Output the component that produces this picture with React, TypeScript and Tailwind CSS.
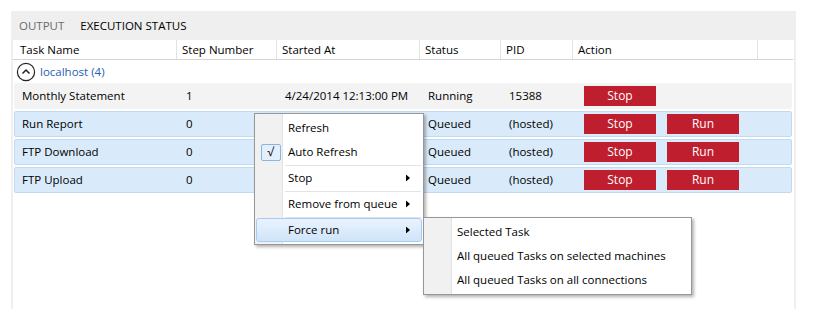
import React from 'react';

const FONT = { fontFamily: '"Segoe UI", "Open Sans", "Noto Sans", sans-serif' };

const cols = ['w-[163px]', 'w-[100px]', 'w-[143px]', 'w-[81px]', 'w-[72px]'];

type Task = { name: string; step: string; started: string; status: string; pid: string; canRun: boolean };

const tasks: Task[] = [
  { name: 'Monthly Statement', step: '1', started: '4/24/2014 12:13:00 PM', status: 'Running', pid: '15388', canRun: false },
  { name: 'Run Report', step: '0', started: '', status: 'Queued', pid: '(hosted)', canRun: true },
  { name: 'FTP Download', step: '0', started: '', status: 'Queued', pid: '(hosted)', canRun: true },
  { name: 'FTP Upload', step: '0', started: '', status: 'Queued', pid: '(hosted)', canRun: true },
];

const ActionButton: React.FC<{ label: string }> = ({ label }) => (
  <button className="w-[72px] h-[20px] bg-[#be1e2d] text-white text-[12px] leading-[20px] text-center">
    {label}
  </button>
);

const Arrow = () => (
  <svg width="4" height="7" viewBox="0 0 4 7" className="absolute right-[11px] top-1/2 -translate-y-1/2">
    <path d="M0 0 L4 3.5 L0 7 Z" fill="#000" />
  </svg>
);

const Separator = () => (
  <div className="h-[2px] flex items-center pl-[30px] pr-[2px]">
    <div className="h-px w-full bg-[#e2e3e3]" />
  </div>
);

const MenuItem: React.FC<{ label: string; checked?: boolean; sub?: boolean; active?: boolean }> = ({
  label,
  checked,
  sub,
  active,
}) => (
  <div
    className={
      'relative h-[24px] flex items-center text-[11.5px] text-black ' +
      (active
        ? 'mx-[1px] rounded-[3px] border border-[#a8cbf0] bg-gradient-to-b from-[#eaf3fd] to-[#cfe4fa]'
        : 'mx-[2px]')
    }
  >
    <div className="w-[27px] h-full flex items-center justify-center shrink-0">
      {checked && (
        <div className="w-[20px] h-[17px] rounded-[2px] border border-[#8db2e3] bg-[#e3effb] flex items-center justify-center text-[12px] leading-none">
          √
        </div>
      )}
    </div>
    <span className="pl-[4px]">{label}</span>
    {sub && <Arrow />}
  </div>
);

export default function App() {
  return (
    <div style={FONT} className="w-[815px] h-[309px] bg-white relative overflow-hidden pt-[11px] pl-[11px]">
      <div className="w-[785px] h-[298px] border-l-2 border-r-2 border-[#efefef] flex flex-col">
        {/* tabs */}
        <div className="h-[29px] bg-[#efefef] flex items-center gap-[16px] pl-[6px] text-[11.5px]">
          <span className="text-[#6b6b6b]">OUTPUT</span>
          <span className="text-black">EXECUTION STATUS</span>
        </div>

        {/* column headers */}
        <div className="h-[20px] flex border-b border-[#d5d5d5] mr-[1px] text-[11.5px] text-black">
          {['Task Name', 'Step Number', 'Started At', 'Status', 'PID'].map((h, i) => (
            <div
              key={h}
              className={
                (i === 0 ? 'w-[164px] pl-[7px] ' : cols[i] + ' pl-[5px] ') +
                'border-r border-[#e3e3e3] leading-[19px]'
              }
            >
              {h}
            </div>
          ))}
          <div className="w-[185px] pl-[5px] border-r border-[#e3e3e3] leading-[19px]">Action</div>
          <div className="flex-1" />
        </div>

        {/* group */}
        <div className="h-[23px] flex items-center pl-[3px] gap-[4px] text-[11.5px] text-[#1f5fb4]">
          <svg width="20" height="20" viewBox="0 0 20 20">
            <circle cx="10" cy="10" r="8.6" fill="none" stroke="#222" strokeWidth="1.2" />
            <path d="M6.5 11.5 L10 8 L13.5 11.5" fill="none" stroke="#222" strokeWidth="1.5" />
          </svg>
          <span>localhost (4)</span>
        </div>

        {/* rows */}
        <div className="flex flex-col gap-[2px] ml-[1px] mr-[2px]">
          {tasks.map((t) => (
            <div
              key={t.name}
              className={
                'h-[26px] flex items-center text-[11.5px] text-black rounded-[2px] border ' +
                (t.canRun ? 'bg-[#d9ebfa] border-[#c3d9ee]' : 'bg-[#f3f3f3] border-[#f3f3f3]')
              }
            >
              <div className={cols[0] + ' pl-[7px]'}>{t.name}</div>
              <div className={cols[1] + ' pl-[8px]'}>{t.step}</div>
              <div className={cols[2] + ' pl-[7px]'}>{t.started}</div>
              <div className={cols[3] + ' pl-[7px]'}>{t.status}</div>
              <div className={cols[4] + ' pl-[7px]'}>{t.pid}</div>
              <div className="flex gap-[11px] pl-[10px]">
                <ActionButton label="Stop" />
                {t.canRun && <ActionButton label="Run" />}
              </div>
            </div>
          ))}
        </div>
      </div>

      {/* context menu */}
      <div className="absolute left-[254px] top-[113px] w-[170px] py-[2px] border border-[#979797] bg-white shadow-[2px_2px_3px_rgba(0,0,0,0.3)]">
        <div className="absolute left-0 top-0 bottom-0 w-[28px] bg-[#f1f1f1] border-r border-[#e2e3e3]" />
        <div className="relative">
          <MenuItem label="Refresh" />
          <MenuItem label="Auto Refresh" checked />
          <Separator />
          <MenuItem label="Stop" sub />
          <Separator />
          <MenuItem label="Remove from queue" sub />
          <Separator />
          <MenuItem label="Force run" sub active />
        </div>
      </div>

      {/* submenu */}
      <div className="absolute left-[423px] top-[217px] w-[269px] py-[2px] border border-[#979797] bg-white shadow-[2px_2px_3px_rgba(0,0,0,0.3)]">
        <div className="absolute left-0 top-0 bottom-0 w-[28px] bg-[#f1f1f1] border-r border-[#e2e3e3]" />
        <div className="relative">
          <MenuItem label="Selected Task" />
          <MenuItem label="All queued Tasks on selected machines" />
          <MenuItem label="All queued Tasks on all connections" />
        </div>
      </div>
    </div>
  );
}
